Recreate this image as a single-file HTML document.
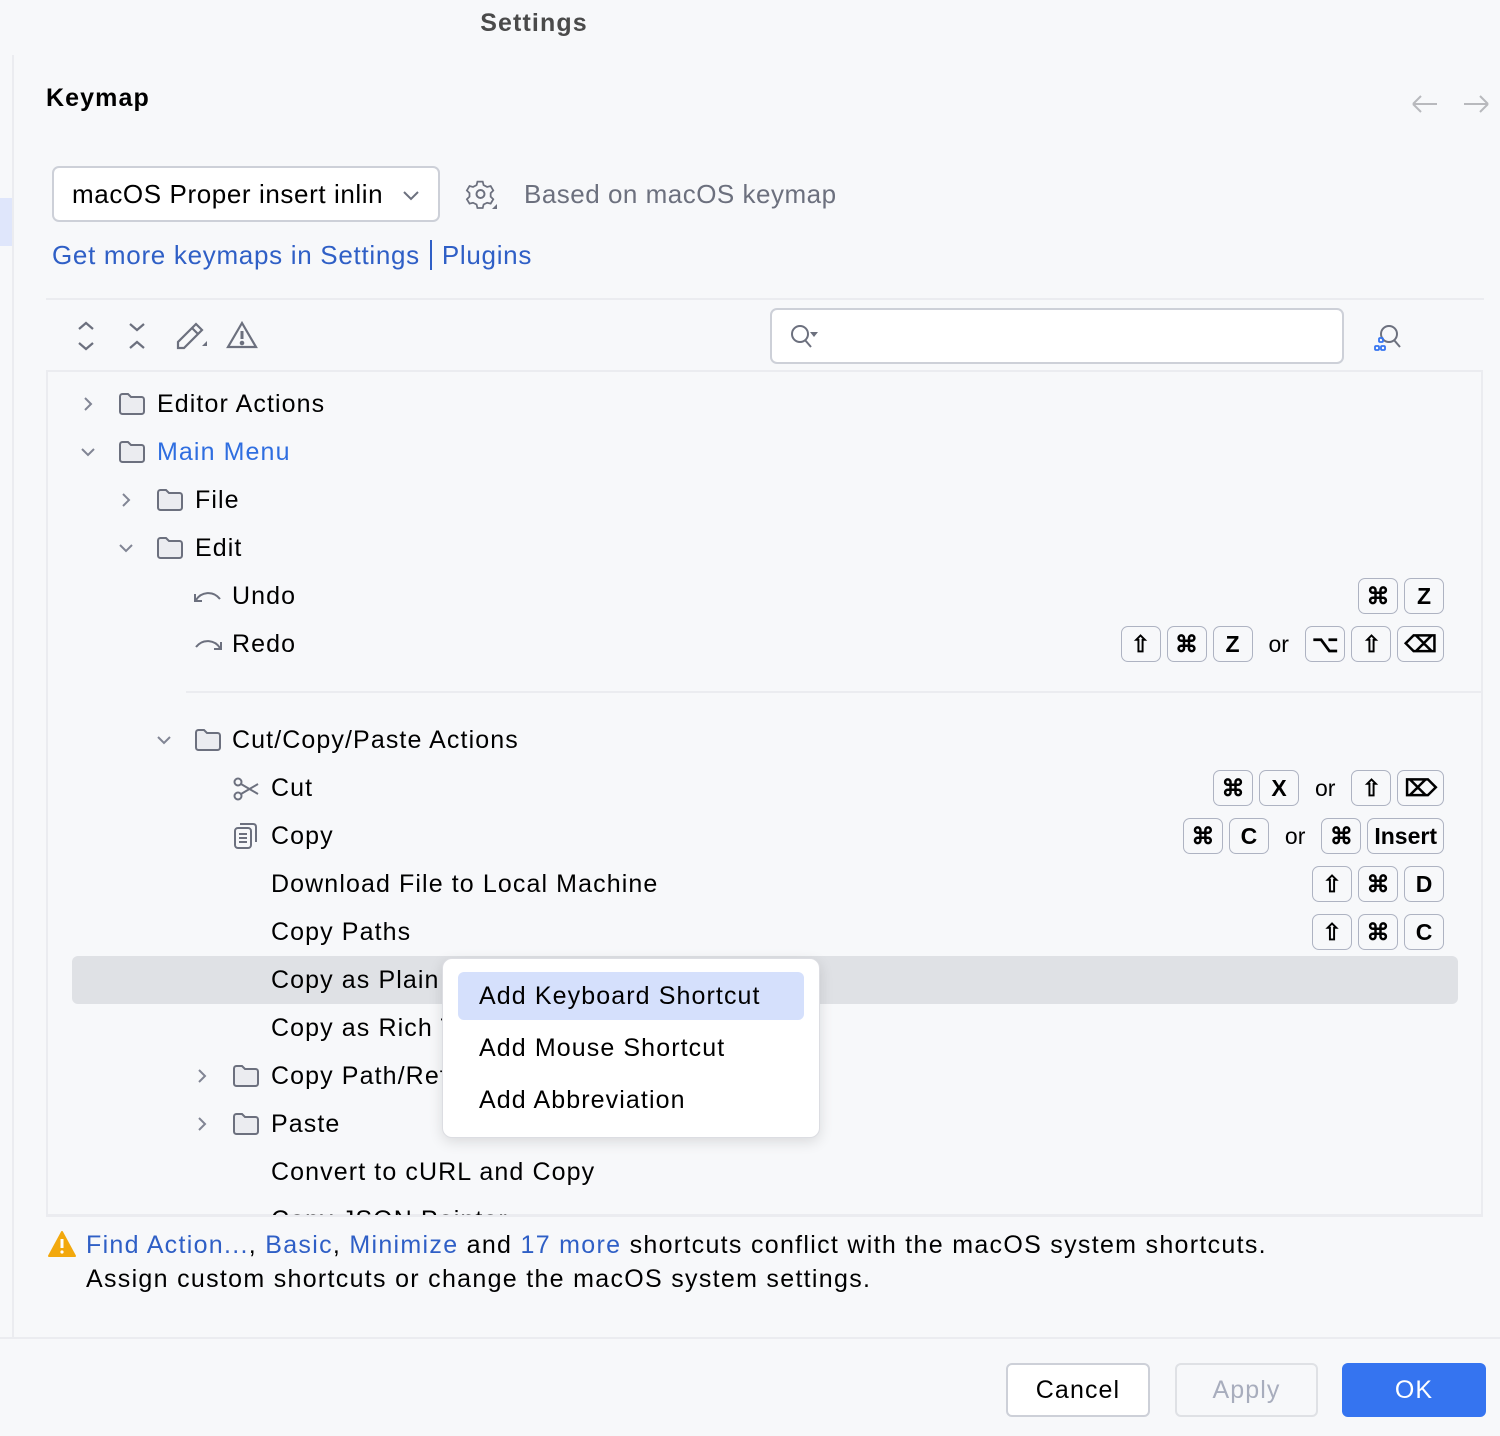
<!DOCTYPE html>
<html><head><meta charset="utf-8">
<style>
*{box-sizing:border-box;margin:0;padding:0}
body{width:1500px;height:1436px;background:#f7f8fa;font-family:"Liberation Sans",sans-serif;color:#000;position:relative;overflow:hidden;letter-spacing:1.1px}
.a{position:absolute}
.t{position:absolute;font-size:25px;line-height:48px;height:48px;white-space:nowrap}
.ic{position:absolute}
.keys{position:absolute;right:56px;height:36px;display:flex;gap:6px;align-items:center;letter-spacing:0}
.k{min-width:40px;height:36px;border:1.5px solid #aeb3c2;border-radius:7px;display:flex;align-items:center;justify-content:center;font-size:23px;font-weight:bold;padding:0 6px;background:#f7f8fa}
.or{font-size:23px;padding:0 10px}
.btn{position:absolute;top:1363px;height:54px;border-radius:6px;font-size:25px;display:flex;align-items:center;justify-content:center}
.link{color:#2f5fc6}
</style></head><body>
<div class="a" style="left:-216px;top:0;width:1500px;height:46px;text-align:center;font-size:25px;font-weight:bold;color:#4a4a4a;line-height:46px">Settings</div>
<div class="a" style="left:12px;top:55px;width:2px;height:1283px;background:#ebecf0"></div>
<div class="a" style="left:0;top:198px;width:12px;height:48px;background:#dfe6fb"></div>
<div class="a" style="left:46px;top:84px;font-size:25px;font-weight:bold">Keymap</div>
<svg class="ic" style="left:1410px;top:92px" width="90" height="24" viewBox="0 0 90 24" fill="none" stroke="#b8b9bd" stroke-width="2"><path d="M3 12H27M3 12L11 4M3 12L11 20"/><path d="M54 12H78M78 12L70 4M78 12L70 20"/></svg>

<div class="a" style="left:52px;top:166px;width:388px;height:56px;background:#fff;border:2px solid #cdd0d8;border-radius:7px"></div>
<div class="a" style="left:72px;top:176px;font-size:26px;line-height:36px;letter-spacing:0.6px">macOS Proper insert inlin</div>
<svg class="ic" style="left:402px;top:188px" width="18" height="14" viewBox="0 0 18 14" fill="none" stroke="#6c707e" stroke-width="2"><path d="M2 4L9 11L16 4"/></svg>
<svg class="ic" style="left:465px;top:179px" width="34" height="34" viewBox="0 0 34 34" fill="none" stroke="#6c707e" stroke-width="2"><path d="M13 3h6l1 4 4 2 4-1 3 5-3 3v4l3 3-3 5-4-1-4 2-1 4h-6l-1-4-4-2-4 1-3-5 3-3v-4l-3-3 3-5 4 1 4-2z" transform="translate(1,0) scale(0.88)"/><circle cx="15.5" cy="15" r="4"/><path d="M27 30h5v-5z" fill="#6c707e" stroke="none"/></svg>
<div class="a" style="left:524px;top:176px;font-size:26px;line-height:36px;color:#6c707e;letter-spacing:0.5px">Based on macOS keymap</div>
<div class="a link" style="left:52px;top:236px;font-size:26px;line-height:38px;letter-spacing:0.7px">Get more keymaps in Settings<span style="display:inline-block;width:2px;height:30px;background:#2f5fc6;vertical-align:-6px;margin:0 10px"></span>Plugins</div>
<div class="a" style="left:46px;top:298px;width:1438px;height:2px;background:#ebecf0"></div>

<svg class="ic" style="left:72px;top:318px" width="190" height="36" viewBox="0 0 190 36" fill="none" stroke="#6c707e" stroke-width="2.2"><path d="M7 11L14 5L21 11M7 25L14 31L21 25"/><path d="M58 6L65 12L72 6M58 30L65 24L72 30"/><path d="M106 30V24L124 6L130 12L112 30Z M120 10L126 16"/><path d="M130 28h5v-5z" fill="#6c707e" stroke="none"/><path d="M170 5L184 29H156Z"/><path d="M170 13v8" stroke-width="3"/><circle cx="170" cy="25" r="1.2" fill="#6c707e"/></svg>

<div class="a" style="left:770px;top:308px;width:574px;height:56px;background:#fff;border:2px solid #cdd0d8;border-radius:7px"></div>
<svg class="ic" style="left:786px;top:320px" width="40" height="32" viewBox="0 0 40 32" fill="none" stroke="#6c707e" stroke-width="2"><circle cx="14" cy="14" r="8"/><path d="M19 20L25 27"/><path d="M24 12h8l-4 5z" fill="#6c707e" stroke="none"/></svg>
<svg class="ic" style="left:1370px;top:320px" width="36" height="36" viewBox="0 0 36 36" fill="none"><circle cx="19" cy="14" r="8" stroke="#6c707e" stroke-width="2"/><path d="M24 20L30 27" stroke="#6c707e" stroke-width="2"/><g stroke="#3574f0" stroke-width="1.8"><rect x="9" y="18" width="4" height="4" rx="1"/><rect x="5" y="26" width="4" height="4" rx="1"/><rect x="11" y="26" width="4" height="4" rx="1"/></g></svg>

<div class="a" style="left:46px;top:370px;width:1437px;height:847px;border:2px solid #ebecf0;border-bottom:3px solid #ebecf0;overflow:hidden"></div>
<div class="a" style="left:186px;top:691px;width:1296px;height:2px;background:#ebecf0"></div>
<div class="a" style="left:72px;top:956px;width:1386px;height:48px;background:#dfe1e5;border-radius:6px"></div>

<svg width="0" height="0" style="position:absolute"><defs>
<symbol id="fold" viewBox="0 0 28 24"><path d="M2 4.5C2 3 3 2 4.5 2H10L13 5H23.5C25 5 26 6 26 7.5V19.5C26 21 25 22 23.5 22H4.5C3 22 2 21 2 19.5Z" fill="#ebecf0" stroke="#6c707e" stroke-width="2"/></symbol>
<symbol id="chr" viewBox="0 0 16 16"><path d="M5 2L11 8L5 14" fill="none" stroke="#818594" stroke-width="2"/></symbol>
<symbol id="chd" viewBox="0 0 16 16"><path d="M2 5L8 11L14 5" fill="none" stroke="#818594" stroke-width="2"/></symbol>
</defs></svg>

<svg class="ic" style="left:80px;top:396px" width="16" height="16"><use href="#chr"/></svg>
<svg class="ic" style="left:118px;top:392px" width="28" height="24"><use href="#fold"/></svg>
<div class="t" style="left:157px;top:380px">Editor Actions</div>

<svg class="ic" style="left:80px;top:444px" width="16" height="16"><use href="#chd"/></svg>
<svg class="ic" style="left:118px;top:440px" width="28" height="24"><use href="#fold"/></svg>
<div class="t" style="left:157px;top:428px;color:#2f6ee0">Main Menu</div>

<svg class="ic" style="left:118px;top:492px" width="16" height="16"><use href="#chr"/></svg>
<svg class="ic" style="left:156px;top:488px" width="28" height="24"><use href="#fold"/></svg>
<div class="t" style="left:195px;top:476px">File</div>

<svg class="ic" style="left:118px;top:540px" width="16" height="16"><use href="#chd"/></svg>
<svg class="ic" style="left:156px;top:536px" width="28" height="24"><use href="#fold"/></svg>
<div class="t" style="left:195px;top:524px">Edit</div>

<svg class="ic" style="left:193px;top:586px" width="30" height="20" viewBox="0 0 30 20" fill="none" stroke="#6c707e" stroke-width="2"><path d="M3 14C8 6 20 4 27 13"/><path d="M2 8V15H9"/></svg>
<div class="t" style="left:232px;top:572px">Undo</div>
<svg class="ic" style="left:193px;top:634px" width="30" height="20" viewBox="0 0 30 20" fill="none" stroke="#6c707e" stroke-width="2"><path d="M3 13C10 4 22 6 27 14"/><path d="M28 8V15H21"/></svg>
<div class="t" style="left:232px;top:620px">Redo</div>

<svg class="ic" style="left:156px;top:732px" width="16" height="16"><use href="#chd"/></svg>
<svg class="ic" style="left:194px;top:728px" width="28" height="24"><use href="#fold"/></svg>
<div class="t" style="left:232px;top:716px">Cut/Copy/Paste Actions</div>

<svg class="ic" style="left:232px;top:776px" width="28" height="26" viewBox="0 0 28 26" fill="none" stroke="#6c707e" stroke-width="2"><circle cx="6" cy="6" r="3.5"/><circle cx="6" cy="20" r="3.5"/><path d="M9 8L26 18M9 18L26 8"/></svg>
<div class="t" style="left:271px;top:764px">Cut</div>
<svg class="ic" style="left:233px;top:822px" width="26" height="28" viewBox="0 0 26 28" fill="none" stroke="#6c707e" stroke-width="2"><rect x="2" y="6" width="16" height="20" rx="3"/><path d="M7 2H20C22 2 23 3 23 5V20"/><path d="M6 12H14M6 16H14M6 20H14"/></svg>
<div class="t" style="left:271px;top:812px">Copy</div>
<div class="t" style="left:271px;top:860px">Download File to Local Machine</div>
<div class="t" style="left:271px;top:908px">Copy Paths</div>
<div class="t" style="left:271px;top:956px">Copy as Plain Text</div>
<div class="t" style="left:271px;top:1004px">Copy as Rich Text</div>
<svg class="ic" style="left:194px;top:1068px" width="16" height="16"><use href="#chr"/></svg>
<svg class="ic" style="left:232px;top:1064px" width="28" height="24"><use href="#fold"/></svg>
<div class="t" style="left:271px;top:1052px">Copy Path/Reference...</div>
<svg class="ic" style="left:194px;top:1116px" width="16" height="16"><use href="#chr"/></svg>
<svg class="ic" style="left:232px;top:1112px" width="28" height="24"><use href="#fold"/></svg>
<div class="t" style="left:271px;top:1100px">Paste</div>
<div class="t" style="left:271px;top:1148px">Convert to cURL and Copy</div>
<div class="a" style="left:48px;top:1196px;width:1432px;height:19px;overflow:hidden"><div class="t" style="left:223px;top:0">Copy JSON Pointer</div></div>

<div class="keys" style="top:578px"><div class="k">⌘</div><div class="k">Z</div></div>
<div class="keys" style="top:626px"><div class="k">⇧</div><div class="k">⌘</div><div class="k">Z</div><span class="or">or</span><div class="k">⌥</div><div class="k">⇧</div><div class="k">⌫</div></div>
<div class="keys" style="top:770px"><div class="k">⌘</div><div class="k">X</div><span class="or">or</span><div class="k">⇧</div><div class="k">⌦</div></div>
<div class="keys" style="top:818px"><div class="k">⌘</div><div class="k">C</div><span class="or">or</span><div class="k">⌘</div><div class="k">Insert</div></div>
<div class="keys" style="top:866px"><div class="k">⇧</div><div class="k">⌘</div><div class="k">D</div></div>
<div class="keys" style="top:914px"><div class="k">⇧</div><div class="k">⌘</div><div class="k">C</div></div>

<div class="a" style="left:442px;top:958px;width:378px;height:180px;background:#fff;border:1px solid #dcdde2;border-radius:10px;box-shadow:0 4px 14px rgba(0,0,0,0.12)"></div>
<div class="a" style="left:458px;top:972px;width:346px;height:48px;background:#d5e0fc;border-radius:6px"></div>
<div class="t" style="left:479px;top:972px">Add Keyboard Shortcut</div>
<div class="t" style="left:479px;top:1024px">Add Mouse Shortcut</div>
<div class="t" style="left:479px;top:1076px">Add Abbreviation</div>

<svg class="ic" style="left:47px;top:1230px" width="30" height="28" viewBox="0 0 30 28"><path d="M15 2L28 26H2Z" fill="#f2a80d" stroke="#f2a80d" stroke-width="2" stroke-linejoin="round"/><path d="M15 9V18" stroke="#fff" stroke-width="3"/><circle cx="15" cy="22" r="1.6" fill="#fff"/></svg>
<div class="a" style="left:86px;top:1228px;font-size:25px;line-height:34px;white-space:nowrap;letter-spacing:1.3px"><span class="link">Find Action...</span>, <span class="link">Basic</span>, <span class="link">Minimize</span> and <span class="link">17 more</span> shortcuts conflict with the macOS system shortcuts.<br>Assign custom shortcuts or change the macOS system settings.</div>

<div class="a" style="left:0;top:1337px;width:1500px;height:2px;background:#ebecf0"></div>
<div class="btn" style="left:1006px;width:144px;background:#fff;border:2px solid #cdd0d8">Cancel</div>
<div class="btn" style="left:1175px;width:143px;border:2px solid #dfe1e5;color:#a8adbd">Apply</div>
<div class="btn" style="left:1342px;width:144px;background:#3574f0;color:#fff">OK</div>
</body></html>
